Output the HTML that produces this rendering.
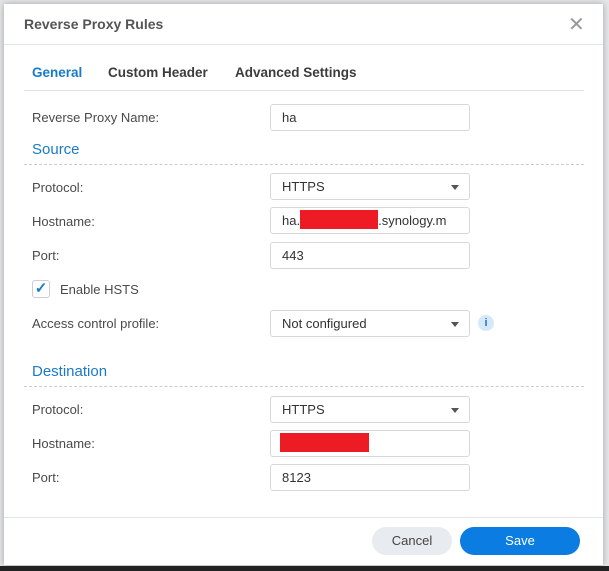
<!DOCTYPE html><html><head><style>
body{margin:0;width:609px;height:571px;background:#e4e6e8;font-family:"Liberation Sans",sans-serif;position:relative;overflow:hidden}
.dlg{position:absolute;left:4px;top:4px;width:599px;height:561px;background:#fff;box-shadow:0 0 6px rgba(0,0,0,.3)}
.bot{position:absolute;left:0;top:566px;width:609px;height:5px;background:#222}
.a{position:absolute}
.t{font-size:13px;color:#4a4a4a}
.inp{position:absolute;left:270px;height:25px;border:1px solid #d6d9dc;border-radius:3px;font-size:13px;color:#333;line-height:25px;padding-left:11px;box-sizing:content-box;width:187px}
.dd::after{content:"";position:absolute;right:10px;top:11px;border:4px solid transparent;border-top:5px solid #555}
.h{font-size:15px;color:#1a7ac6}
.dash{position:absolute;left:24px;width:560px;border-top:1px dashed #ccc}
</style></head><body>
<div class="dlg">
<div class="a" style="left:20px;top:12px;font-size:14px;font-weight:bold;color:#555">Reverse Proxy Rules</div>
<div class="a" style="left:564px;top:8px;font-size:20px;color:#999">✕</div>
<div class="a" style="left:0;top:40px;width:599px;border-top:1px solid #e3e5e8"></div>
<div class="a" style="left:28px;top:61px;font-size:13.5px;font-weight:bold;color:#1a7ac6">General</div>
<div class="a" style="left:104px;top:61px;font-size:13.5px;font-weight:bold;color:#3c3c3c">Custom Header</div>
<div class="a" style="left:231px;top:61px;font-size:13.5px;font-weight:bold;color:#3c3c3c">Advanced Settings</div>
<div class="a" style="left:20px;top:86px;width:560px;border-top:1px solid #dfe2e5"></div>
</div>
<div class="a t" style="left:32px;top:110px">Reverse Proxy Name:</div>
<div class="inp" style="top:104px">ha</div>
<div class="a h" style="left:32px;top:141px">Source</div>
<div class="dash" style="top:164px"></div>
<div class="a t" style="left:32px;top:180px">Protocol:</div>
<div class="inp dd" style="top:173px">HTTPS</div>
<div class="a t" style="left:32px;top:214px">Hostname:</div>
<div class="inp" style="top:207px">ha.<span style="display:inline-block;width:78px;height:19px;background:#ed1c24;vertical-align:-4px"></span>.synology.m</div>
<div class="a t" style="left:32px;top:248px">Port:</div>
<div class="inp" style="top:242px">443</div>
<div class="a" style="left:32px;top:280px;width:16px;height:16px;border:1px solid #ccd;border-radius:3px;color:#1a7ac6;font-size:15px;line-height:16px;text-align:center;font-weight:bold">✓</div>
<div class="a t" style="left:60px;top:282px">Enable HSTS</div>
<div class="a t" style="left:32px;top:316px">Access control profile:</div>
<div class="inp dd" style="top:310px">Not configured</div>
<div class="a" style="left:478px;top:315px;width:16px;height:16px;border-radius:50%;background:#d6e8f7;color:#1a7ac6;font-size:11px;font-weight:bold;text-align:center;line-height:16px">i</div>
<div class="a h" style="left:32px;top:363px">Destination</div>
<div class="dash" style="top:386px"></div>
<div class="a t" style="left:32px;top:402px">Protocol:</div>
<div class="inp dd" style="top:396px">HTTPS</div>
<div class="a t" style="left:32px;top:436px">Hostname:</div>
<div class="inp" style="top:430px"></div>
<div class="a" style="left:280px;top:433px;width:89px;height:19px;background:#ed1c24"></div>
<div class="a t" style="left:32px;top:470px">Port:</div>
<div class="inp" style="top:464px">8123</div>
<div class="a" style="left:4px;top:517px;width:599px;border-top:1px solid #e3e5e8"></div>
<div class="a" style="left:372px;top:527px;width:80px;height:28px;border-radius:14px;background:#e8ebef;color:#444;font-size:13px;text-align:center;line-height:28px">Cancel</div>
<div class="a" style="left:460px;top:527px;width:120px;height:28px;border-radius:14px;background:#0a7ce2;color:#fff;font-size:13px;text-align:center;line-height:28px">Save</div>
<div class="bot"></div>
</body></html>
